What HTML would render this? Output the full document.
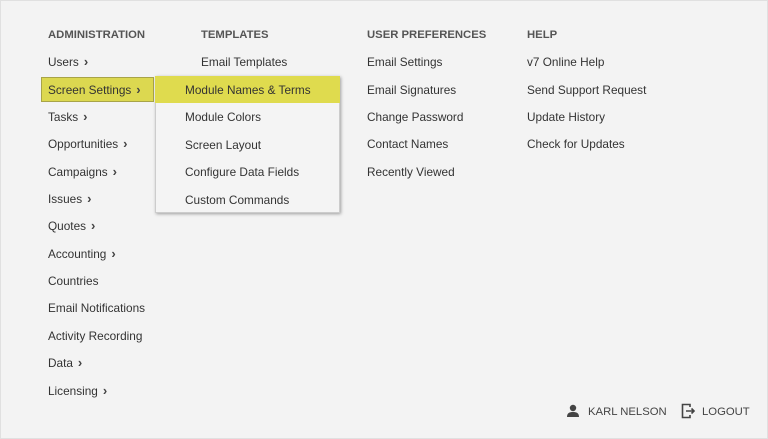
<!DOCTYPE html>
<html><head><style>
body{margin:0;width:768px;height:439px;background:#f3f3f3;font-family:"Liberation Sans",sans-serif;font-size:11.8px;color:#333;position:relative;overflow:hidden}
#bd{position:absolute;left:0;top:0;width:766px;height:437px;border:1px solid #e0e0e0}
.t{position:absolute;white-space:nowrap;line-height:14px}
.h{font-weight:bold;color:#555;font-size:11.3px}
.c{font-size:13px;margin-left:5px;font-weight:bold;color:#444}
#hl{position:absolute;left:41px;top:77px;width:111px;height:23px;background:#dcd850;border:1px solid #a8a448}
#dd{position:absolute;left:155px;top:76px;width:185px;height:137px;background:#f4f4f4;box-shadow:1px 1px 3px rgba(0,0,0,.35);border:1px solid #ccc;box-sizing:border-box}
#dh{position:absolute;left:155px;top:76px;width:185px;height:27px;background:#dfdb4e}
</style></head><body>
<div id="bd"></div>
<div id="hl"></div>
<div class="t h" style="left:48px;top:28px">ADMINISTRATION</div>
<div class="t h" style="left:201px;top:28px">TEMPLATES</div>
<div class="t h" style="left:367px;top:28px">USER PREFERENCES</div>
<div class="t h" style="left:527px;top:28px">HELP</div>

<div class="t" style="left:48px;top:55px">Users<span class="c">›</span></div>
<div class="t" style="left:48px;top:83px">Screen Settings<span class="c">›</span></div>
<div class="t" style="left:48px;top:110px">Tasks<span class="c">›</span></div>
<div class="t" style="left:48px;top:137px">Opportunities<span class="c">›</span></div>
<div class="t" style="left:48px;top:165px">Campaigns<span class="c">›</span></div>
<div class="t" style="left:48px;top:192px">Issues<span class="c">›</span></div>
<div class="t" style="left:48px;top:219px">Quotes<span class="c">›</span></div>
<div class="t" style="left:48px;top:247px">Accounting<span class="c">›</span></div>
<div class="t" style="left:48px;top:274px">Countries</div>
<div class="t" style="left:48px;top:301px">Email Notifications</div>
<div class="t" style="left:48px;top:329px">Activity Recording</div>
<div class="t" style="left:48px;top:356px">Data<span class="c">›</span></div>
<div class="t" style="left:48px;top:384px">Licensing<span class="c">›</span></div>

<div class="t" style="left:201px;top:55px">Email Templates</div>

<div id="dd"></div><div id="dh"></div>
<div class="t" style="left:185px;top:83px">Module Names &amp; Terms</div>
<div class="t" style="left:185px;top:110px">Module Colors</div>
<div class="t" style="left:185px;top:138px">Screen Layout</div>
<div class="t" style="left:185px;top:165px">Configure Data Fields</div>
<div class="t" style="left:185px;top:193px">Custom Commands</div>

<div class="t" style="left:367px;top:55px">Email Settings</div>
<div class="t" style="left:367px;top:83px">Email Signatures</div>
<div class="t" style="left:367px;top:110px">Change Password</div>
<div class="t" style="left:367px;top:137px">Contact Names</div>
<div class="t" style="left:367px;top:165px">Recently Viewed</div>

<div class="t" style="left:527px;top:55px">v7 Online Help</div>
<div class="t" style="left:527px;top:83px">Send Support Request</div>
<div class="t" style="left:527px;top:110px">Update History</div>
<div class="t" style="left:527px;top:137px">Check for Updates</div>

<svg style="position:absolute;left:566px;top:404px" width="14" height="14" viewBox="0 0 14 14"><circle cx="7" cy="4" r="3.2" fill="#444"/><path d="M1 13c0-4 2.5-5 6-5s6 1 6 5z" fill="#444"/></svg>
<div class="t" style="left:588px;top:405px;color:#444;font-size:11.3px">KARL NELSON</div>
<svg style="position:absolute;left:681px;top:403px" width="16" height="16" viewBox="0 0 16 16" fill="none" stroke="#444" stroke-width="1.6"><path d="M9 4V1.5H1.5v13H9V12"/><path d="M5 8h8M10.5 5.5L13 8l-2.5 2.5"/></svg>
<div class="t" style="left:702px;top:405px;color:#444;font-size:11.3px">LOGOUT</div>
</body></html>
